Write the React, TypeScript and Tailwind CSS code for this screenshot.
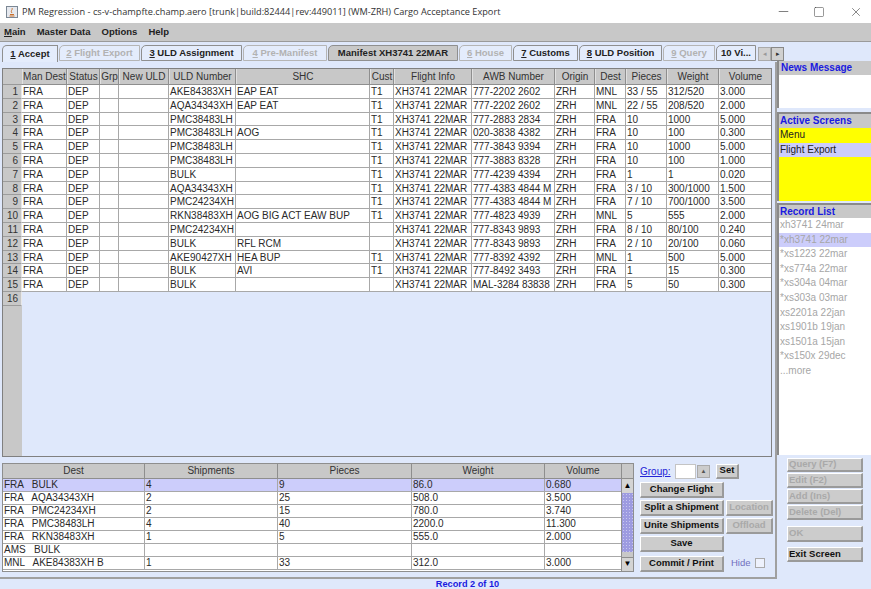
import { Minus, Square, X } from 'lucide-react'

const cols = [45, 33, 19, 50, 67, 134, 24, 78, 83, 40, 31, 41, 52, 53]
const heads = ['Man Dest', 'Status', 'Grp', 'New ULD', 'ULD Number', 'SHC', 'Cust', 'Flight Info', 'AWB Number', 'Origin', 'Dest', 'Pieces', 'Weight', 'Volume']
const F = 'XH3741 22MAR'
const rows = [
  ['FRA', 'DEP', '', '', 'AKE84383XH', 'EAP EAT', 'T1', F, '777-2202 2602', 'ZRH', 'MNL', '33 / 55', '312/520', '3.000'],
  ['FRA', 'DEP', '', '', 'AQA34343XH', 'EAP EAT', 'T1', F, '777-2202 2602', 'ZRH', 'MNL', '22 / 55', '208/520', '2.000'],
  ['FRA', 'DEP', '', '', 'PMC38483LH', '', 'T1', F, '777-2883 2834', 'ZRH', 'FRA', '10', '1000', '5.000'],
  ['FRA', 'DEP', '', '', 'PMC38483LH', 'AOG', 'T1', F, '020-3838 4382', 'ZRH', 'FRA', '10', '100', '0.300'],
  ['FRA', 'DEP', '', '', 'PMC38483LH', '', 'T1', F, '777-3843 9394', 'ZRH', 'FRA', '10', '1000', '5.000'],
  ['FRA', 'DEP', '', '', 'PMC38483LH', '', 'T1', F, '777-3883 8328', 'ZRH', 'FRA', '10', '100', '1.000'],
  ['FRA', 'DEP', '', '', 'BULK', '', 'T1', F, '777-4239 4394', 'ZRH', 'FRA', '1', '1', '0.020'],
  ['FRA', 'DEP', '', '', 'AQA34343XH', '', 'T1', F, '777-4383 4844 M', 'ZRH', 'FRA', '3 / 10', '300/1000', '1.500'],
  ['FRA', 'DEP', '', '', 'PMC24234XH', '', 'T1', F, '777-4383 4844 M', 'ZRH', 'FRA', '7 / 10', '700/1000', '3.500'],
  ['FRA', 'DEP', '', '', 'RKN38483XH', 'AOG BIG ACT EAW BUP', 'T1', F, '777-4823 4939', 'ZRH', 'MNL', '5', '555', '2.000'],
  ['FRA', 'DEP', '', '', 'PMC24234XH', '', '', F, '777-8343 9893', 'ZRH', 'FRA', '8 / 10', '80/100', '0.240'],
  ['FRA', 'DEP', '', '', 'BULK', 'RFL RCM', '', F, '777-8343 9893', 'ZRH', 'FRA', '2 / 10', '20/100', '0.060'],
  ['FRA', 'DEP', '', '', 'AKE90427XH', 'HEA BUP', 'T1', F, '777-8392 4392', 'ZRH', 'MNL', '1', '500', '5.000'],
  ['FRA', 'DEP', '', '', 'BULK', 'AVI', 'T1', F, '777-8492 3493', 'ZRH', 'FRA', '1', '15', '0.300'],
  ['FRA', 'DEP', '', '', 'BULK', '', '', F, 'MAL-3284 83838', 'ZRH', 'FRA', '5', '50', '0.300'],
]

const tabs = [
  { n: '1', label: ' Accept', w: 'w-[56px]', active: true },
  { n: '2', label: ' Flight Export', w: 'w-[81px]', off: true },
  { n: '3', label: ' ULD Assignment', w: 'w-[101px]' },
  { n: '4', label: ' Pre-Manifest', w: 'w-[84px]', off: true },
  { n: '', label: 'Manifest XH3741 22MAR', w: 'w-[130px]', gray: true },
  { n: '6', label: ' House', w: 'w-[53px]', off: true },
  { n: '7', label: ' Customs', w: 'w-[65px]' },
  { n: '8', label: ' ULD Position', w: 'w-[83px]' },
  { n: '9', label: ' Query', w: 'w-[52px]', off: true },
  { n: '', label: '10 Vi...', w: 'w-[40px]' },
]

const summaryCols = ['w-[142px]', 'w-[133px]', 'w-[134px]', 'w-[133px]', 'w-[77px]']
const summaryHeads = ['Dest', 'Shipments', 'Pieces', 'Weight', 'Volume']
const summary = [
  ['FRA   BULK', '4', '9', '86.0', '0.680'],
  ['FRA   AQA34343XH', '2', '25', '508.0', '3.500'],
  ['FRA   PMC24234XH', '2', '15', '780.0', '3.740'],
  ['FRA   PMC38483LH', '4', '40', '2200.0', '11.300'],
  ['FRA   RKN38483XH', '1', '5', '555.0', '2.000'],
  ['AMS   BULK', '', '', '', ''],
  ['MNL   AKE84383XH B', '1', '33', '312.0', '3.000'],
]

const records = ['xh3741 24mar', '*xh3741 22mar', '*xs1223 22mar', '*xs774a 22mar', '*xs304a 04mar', '*xs303a 03mar', 'xs2201a 22jan', 'xs1901b 19jan', 'xs1501a 15jan', '*xs150x 29dec', '...more']

function Btn({ label, off, className = '' }: { label: string; off?: boolean; className?: string }) {
  return (
    <div className={`flex items-center justify-center bg-[#cccccc] border-t border-l border-white border-r-2 border-b-2 border-r-[#9a9a9a] border-b-[#9a9a9a] text-[9.5px] font-bold ${off ? 'text-[#a9a9a9]' : 'text-[#111]'} ${className}`}>
      {label}
    </div>
  )
}

function SideHead({ label, inset }: { label: string; inset?: boolean }) {
  return <div className={`h-[14px] bg-[#c8c8c8] text-[10px] leading-[14px] font-bold text-[#1a1ae0] ${inset ? 'pl-[2px]' : 'pl-[1px]'}`}>{label}</div>
}

export default function App() {
  return (
    <div className="w-[871px] h-[589px] overflow-hidden flex flex-col bg-[#dfe8fb] text-[10px] text-[#222] font-['Liberation_Sans',Arial,sans-serif]">
      {/* title bar */}
      <div className="h-[23px] bg-white flex items-center pl-[6px] shrink-0">
        <svg width="12" height="12" viewBox="0 0 12 12" className="mr-[4px]">
          <rect x="0.5" y="0.5" width="11" height="11" fill="#e6e9ef" stroke="#7b8794" />
          <path d="M6 2c1 2-2 2.500 0 5M4 8.500h4M3.500 10h5" stroke="#c9702c" fill="none" />
        </svg>
        <span className="font-['Open_Sans',sans-serif] text-[9.2px] text-[#333]">PM Regression - cs-v-champfte.champ.aero [trunk|build:82444|rev:449011] (WM-ZRH) Cargo Acceptance Export</span>
        <div className="ml-auto flex items-center text-[#333]">
          <Minus size={15} strokeWidth={1} className="mr-[22px]" />
          <Square size={12} strokeWidth={1} className="mr-[24px]" />
          <X size={14} strokeWidth={1} className="mr-[8px]" />
        </div>
      </div>

      {/* menu bar */}
      <div className="h-[18px] bg-[#c8c8c8] flex items-center gap-[11px] pl-[4px] shrink-0 text-[9.5px] font-bold text-[#222]">
        <span><span className="underline">M</span>ain</span>
        <span>Master Data</span>
        <span>Options</span>
        <span>Help</span>
      </div>

      <div className="flex-1 flex min-h-0 border-t border-[#9a9a9a]">
        {/* main column */}
        <div className="w-[777px] shrink-0 flex flex-col">
          {/* tabs */}
          <div className="h-[20px] flex items-end pl-[2px] gap-[1px] shrink-0">
            {tabs.map((t) => (
              <div
                key={t.label}
                className={`${t.w} shrink-0 flex items-center justify-center whitespace-pre rounded-tl-[5px] border-t border-l border-r border-[#8f8f8f] text-[9.5px] font-bold ${t.gray ? 'bg-[#c8c8c8] text-[#111]' : 'bg-[#e4ecfc]'} ${t.off ? 'text-[#b2b2b2] border-[#b5b5b5]' : 'text-[#222]'} ${t.active ? 'h-[17px]' : 'h-[16px] mb-[1px] border-b'}`}
              >
                {t.n && <span className="underline">{t.n}</span>}
                {t.label}
              </div>
            ))}
            <div className="flex mb-[1px] ml-[1px]">
              <div className="w-[13px] h-[14px] bg-[#d0d0d0] border border-[#aaa] text-[#999] text-[7px] leading-[12px] text-center">◂</div>
              <div className="w-[13px] h-[14px] bg-[#d0d0d0] border border-[#888] text-[#333] text-[7px] leading-[12px] text-center">▸</div>
            </div>
          </div>

          <div className="flex-1 min-h-0 flex flex-col border-r-2 border-b-2 border-[#a0a0a0] pl-[2px] pr-[3px] pt-[6px]">
            {/* shipment table */}
            <div className="h-[389px] shrink-0 border border-[#808080] relative overflow-hidden flex">
              <div className="w-[19px] shrink-0 bg-[#c8c8c8] flex flex-col">
                <div className="h-[16px] border-b border-[#999]" />
                {Array.from({ length: 16 }, (_, i) => (
                  <div key={i} className="h-[13.8px] shrink-0 border-b border-[#9c9c9c] border-r border-r-[#e8e8e8] text-right pr-[3px] text-[10px] leading-[13px] text-[#333]">
                    {i + 1}
                  </div>
                ))}
              </div>
              <div className="flex-1 min-w-0">
                <div className="flex h-[16px] bg-[#c8c8c8] border-b border-[#8e8e8e]">
                  {heads.map((h, i) => (
                    <div key={h} style={{ width: cols[i] }} className="shrink-0 border-r border-[#8e8e8e] border-l border-l-[#e0e0e0] text-center text-[10px] leading-[15px] text-[#333] whitespace-nowrap overflow-hidden">
                      {h}
                    </div>
                  ))}
                </div>
                {rows.map((r, ri) => (
                  <div key={ri} className="flex h-[13.8px] bg-white border-b border-[#a8a8a8]">
                    {r.map((c, ci) => (
                      <div key={ci} style={{ width: cols[ci] }} className="shrink-0 border-r border-[#a8a8a8] pl-[1px] text-[10px] leading-[13px] text-[#2a2a2a] whitespace-nowrap overflow-hidden">
                        {c}
                      </div>
                    ))}
                  </div>
                ))}
              </div>
            </div>

            {/* summary + actions */}
            <div className="flex mt-[6px]">
              <div className="w-[619px] h-[109px] shrink-0 border border-[#8e8e8e] border-r-0 overflow-hidden bg-white">
                <div className="flex h-[15px] bg-[#c8c8c8] border-b border-[#8e8e8e]">
                  {summaryHeads.map((h, i) => (
                    <div key={h} className={`${summaryCols[i]} shrink-0 border-r border-[#8e8e8e] text-center leading-[14px] text-[#333]`}>{h}</div>
                  ))}
                </div>
                {summary.map((r, ri) => (
                  <div key={ri} className={`flex h-[13px] border-b border-[#a8a8a8] ${ri === 0 ? 'bg-[#cccdfb]' : ''}`}>
                    {r.map((c, ci) => (
                      <div key={ci} className={`${summaryCols[ci]} shrink-0 border-r border-[#a8a8a8] pl-[1px] leading-[12px] whitespace-pre text-[#2a2a2a]`}>{c}</div>
                    ))}
                  </div>
                ))}
              </div>
              {/* scrollbar */}
              <div className="w-[13px] h-[109px] shrink-0 flex flex-col border border-[#8e8e8e] bg-[#c8c8c8]">
                <div className="h-[15px] shrink-0 border-b border-[#8e8e8e]" />
                <div className="h-[14px] shrink-0 bg-[#d4d4d4] text-[8px] leading-[13px] text-center text-black">▲</div>
                <div className="h-[59px] shrink-0 bg-[#9d9be0] bg-[radial-gradient(#c8c8f0_1px,transparent_1px)] bg-[length:3px_3px]" />
                <div className="flex-1" />
                <div className="h-[14px] shrink-0 bg-[#d4d4d4] border-t border-[#8e8e8e] text-[8px] leading-[12px] text-center text-black">▼</div>
              </div>

              <div className="ml-[6px] flex-1 flex flex-col">
                <div className="flex items-center h-[16px]">
                  <span className="w-[35px] text-[10px] text-[#2323d6] underline">Group:</span>
                  <div className="w-[21px] h-[15px] bg-white border border-[#c4c4c4]" />
                  <div className="w-[13px] h-[13px] ml-[1px] bg-[#cccccc] border border-[#aaa] text-[6px] leading-[11px] text-center text-[#555]">▲</div>
                  <Btn label="Set" className="w-[23px] h-[15px] ml-[6px]" />
                </div>
                <div className="flex mt-[3px]">
                  <div className="w-[84px] flex flex-col gap-[2px]">
                    <Btn label="Change Flight" className="h-[16px]" />
                    <Btn label="Split a Shipment" className="h-[16px]" />
                    <Btn label="Unite Shipments" className="h-[16px]" />
                    <Btn label="Save" className="h-[16px]" />
                    <Btn label="Commit / Print" className="h-[16px] mt-[2px] bg-[#c2c2c2]" />
                  </div>
                  <div className="ml-[2px] flex flex-col gap-[2px] pt-[18px]">
                    <Btn label="Location" off className="w-[47px] h-[16px]" />
                    <Btn label="Offload" off className="w-[47px] h-[16px]" />
                    <div className="flex items-center mt-[20px] ml-[5px] text-[9.5px] text-[#6f6fc0]">
                      Hide
                      <span className="w-[10px] h-[10px] ml-[4px] border border-[#aaa] bg-[#eef2fd]" />
                    </div>
                  </div>
                </div>
              </div>
            </div>
            <div className="flex-1" />
          </div>

          {/* status */}
          <div className="h-[10px] shrink-0 pl-[158px] text-center text-[9.2px] leading-[10px] font-bold text-[#1a1ae0]">Record 2 of 10</div>
        </div>

        {/* right column */}
        <div className="flex-1 min-w-0 flex flex-col pt-[19px]">
          <div className="border-l-2 border-[#8a8a8a]">
            <SideHead label="News Message" inset />
            <div className="h-[33px] bg-white" />
          </div>
          <div className="mt-[4px] border-l-2 border-t-2 border-[#8a8a8a]">
            <SideHead label="Active Screens" />
            <div className="h-[73px] bg-[#ffff00] text-[10px] text-[#222]">
              <div className="h-[15px] pl-[1px] leading-[14px]">Menu</div>
              <div className="h-[14px] pl-[1px] leading-[14px] bg-[#cccdfb]">Flight Export</div>
            </div>
          </div>
          <div className="mt-[2px] border-l-2 border-t-2 border-[#8a8a8a]">
            <SideHead label="Record List" />
            <div className="h-[237px] -mt-[1px] bg-white text-[10px] text-[#a6a6a6]">
              {records.map((r, i) => (
                <div key={r} className={`h-[14.6px] pl-[1px] leading-[14px] ${i === 1 ? 'bg-[#cccdfb]' : ''}`}>{r}</div>
              ))}
            </div>
          </div>
          <div className="mt-[3px] ml-[10px] w-[76px] flex flex-col gap-[1px]">
            {['Query (F7)', 'Edit (F2)', 'Add (Ins)', 'Delete (Del)'].map((b, i) => (
              <Btn key={b} label={b} off className={`${i === 0 ? 'h-[14px]' : 'h-[15px]'} !justify-start pl-[1px]`} />
            ))}
            <Btn label="OK" off className="h-[16px] mt-[5px] !justify-start pl-[1px]" />
            <Btn label="Exit Screen" className="h-[15px] mt-[4px] !justify-start pl-[1px]" />
          </div>
        </div>
      </div>
    </div>
  )
}
